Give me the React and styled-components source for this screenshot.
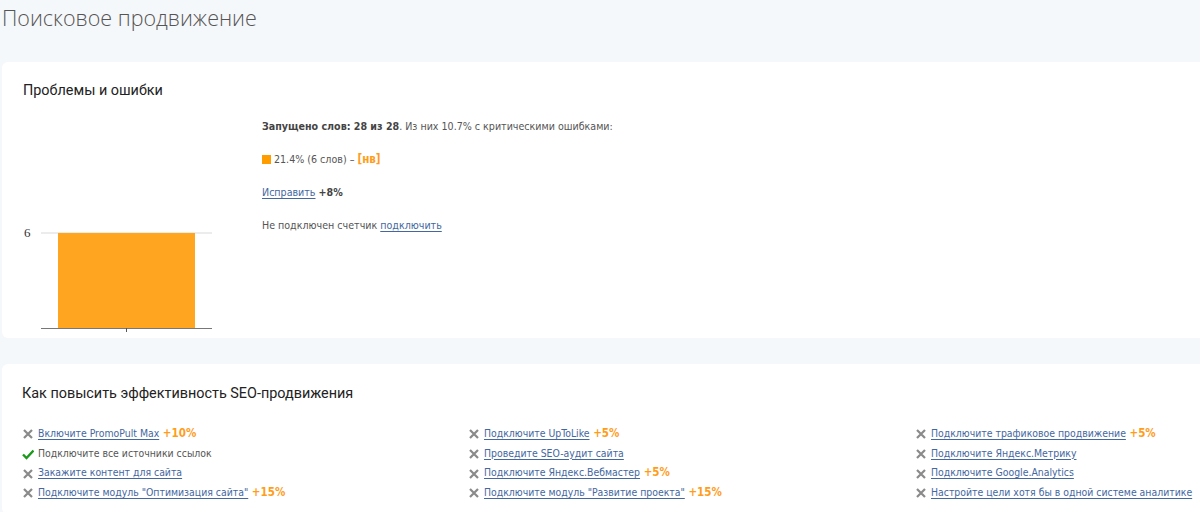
import React from "react";
import styled, { createGlobalStyle } from "styled-components";

const Global = createGlobalStyle`
  html, body { margin: 0; padding: 0; background: #f5f8fa; }
  body { font-family: "DejaVu Sans Condensed", Tahoma, "DejaVu Sans", sans-serif; color: #555; }
  * { box-sizing: border-box; }
`;

const Page = styled.div`
  width: 1200px;
  height: 512px;
  overflow: hidden;
  padding: 0 0 0 2px;
`;

const PageTitle = styled.h1`
  margin: 0;
  padding-top: 3px;
  height: 62px;
  font-family: "Open Sans", sans-serif;
  font-weight: 300;
  font-size: 21.5px;
  line-height: 30px;
  color: #555;
`;

const Card = styled.section`
  background: #fff;
  border-radius: 6px;
  width: 1210px;
  padding: ${(p) => p.$pad};
  margin-bottom: ${(p) => p.$mb || 0}px;
  height: ${(p) => p.$h}px;
`;

const CardTitle = styled.h2`
  margin: 0;
  font-family: Roboto, sans-serif;
  font-weight: 400;
  font-size: 14.4px;
  color: #222;
  line-height: 20px;
`;

const Row = styled.div`
  display: flex;
  margin-top: 14px;
`;

const Chart = styled.div`
  width: 239px;
  flex: none;
`;

const Info = styled.div`
  display: flex;
  flex-direction: column;
  gap: 18px;
  margin-top: 4px;
  font-size: 10.6px;
  line-height: 15px;
  color: #555;
`;

const B = styled.b`
  color: #444;
`;

const Swatch = styled.span`
  display: inline-block;
  width: 9px;
  height: 9px;
  background: #ff9d00;
  margin-right: 3px;
  vertical-align: -1px;
`;

const Orange = styled.b`
  color: #ff9d1a;
  font-size: ${(p) => p.$size || 11.5}px;
`;

const Link = styled.a`
  color: #4467a0;
  text-decoration: underline;
  text-underline-offset: 2px;
  cursor: pointer;
`;

const Grid = styled.div`
  display: grid;
  grid-template-columns: 446px 447px 300px;
  grid-auto-rows: 19.7px;
  margin-top: 19px;
  font-size: 10.4px;
  line-height: 16px;
`;

const Item = styled.div`
  display: flex;
  align-items: center;
  color: #555;
  white-space: nowrap;
`;

const IconBox = styled.span`
  width: 12px;
  height: 12px;
  display: inline-flex;
  margin: 3px 4px 0 0;
  flex: none;
`;

const Cross = () => (
  <IconBox>
    <svg width="12" height="12" viewBox="0 0 12 12">
      <path d="M2 2 L10 10 M10 2 L2 10" stroke="#8a8a8a" strokeWidth="2.2" strokeLinecap="butt" />
    </svg>
  </IconBox>
);

const Check = () => (
  <IconBox>
    <svg width="12" height="12" viewBox="0 0 12 12">
      <path d="M1 6.5 L4.5 10 L11.5 2.5" stroke="#1a9a1a" strokeWidth="2.4" fill="none" />
    </svg>
  </IconBox>
);

const items = [
  { t: "Включите PromoPult Max", b: "+10%" },
  { t: "Подключите UpToLike", b: "+5%" },
  { t: "Подключите трафиковое продвижение", b: "+5%" },
  { t: "Подключите все источники ссылок", done: true },
  { t: "Проведите SEO-аудит сайта" },
  { t: "Подключите Яндекс.Метрику" },
  { t: "Закажите контент для сайта" },
  { t: "Подключите Яндекс.Вебмастер", b: "+5%" },
  { t: "Подключите Google.Analytics" },
  { t: "Подключите модуль \"Оптимизация сайта\"", b: "+15%" },
  { t: "Подключите модуль \"Развитие проекта\"", b: "+15%" },
  { t: "Настройте цели хотя бы в одной системе аналитике" },
];

const BarChart = () => (
  <svg width="239" height="225" viewBox="0 0 239 225">
    <text x="1" y="122" fontFamily="Liberation Serif, serif" fontSize="13" fill="#333">6</text>
    <line x1="18" y1="118" x2="189" y2="118" stroke="#e6e6e6" strokeWidth="1.5" />
    <rect x="35" y="118" width="137" height="95" fill="#ffa51f" />
    <line x1="18" y1="213.5" x2="189" y2="213.5" stroke="#777" strokeWidth="1.2" />
    <line x1="103.5" y1="213" x2="103.5" y2="217" stroke="#555" strokeWidth="1" />
  </svg>
);

export default function App() {
  return (
    <Page>
      <Global />
      <PageTitle>Поисковое продвижение</PageTitle>
      <Card $pad="19px 21px 0" $mb={26} $h={276}>
        <CardTitle>Проблемы и ошибки</CardTitle>
        <Row>
          <Chart>
            <BarChart />
          </Chart>
          <Info>
            <div>
              <B>Запущено слов: 28 из 28</B>. Из них 10.7% с критическими ошибками:
            </div>
            <div>
              <Swatch />21.4% (6 слов) – <Orange $size={11.5}>[нв]</Orange>
            </div>
            <div>
              <Link>Исправить</Link> <B>+8%</B>
            </div>
            <div>
              Не подключен счетчик <Link>подключить</Link>
            </div>
          </Info>
        </Row>
      </Card>
      <Card $pad="20px 20px 0" $h={150}>
        <CardTitle>Как повысить эффективность SEO-продвижения</CardTitle>
        <Grid>
          {items.map((it, i) => (
            <Item key={i}>
              {it.done ? <Check /> : <Cross />}
              {it.done ? <span>{it.t}</span> : <Link>{it.t}</Link>}
              {it.b && <Orange>&nbsp;{it.b}</Orange>}
            </Item>
          ))}
        </Grid>
      </Card>
    </Page>
  );
}
